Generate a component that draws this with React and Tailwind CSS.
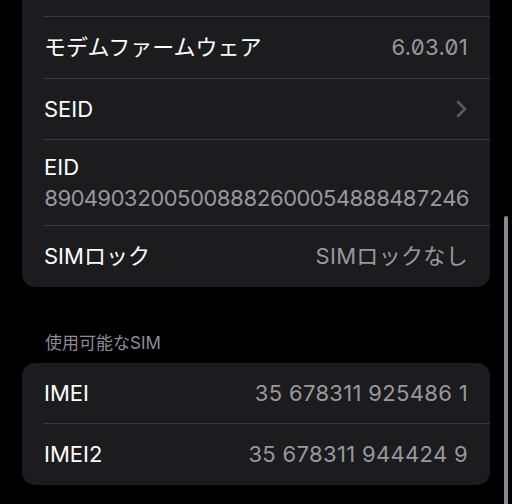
import React from 'react';

const font = "font-['Inter','Noto_Sans_CJK_JP',sans-serif]";

function Separator() {
    return <div className="ml-[22px] h-px bg-[#3a3a3c]" />;
}

function Row({ label, value, chevron, height = 'h-[61px]' }) {
    return (
        <div className={`${height} flex items-center justify-between px-[22px]`}>
            <span className="text-[22px] text-white">{label}</span>
            {value && (
                <span className="text-[22px] text-[#98989e] tracking-[0.015em] [font-feature-settings:'zero']">
                    {value}
                </span>
            )}
            {chevron && (
                <svg width="11" height="18" viewBox="0 0 11 18" className="mr-[1px]">
                    <path d="M2 2l7 7-7 7" fill="none" stroke="#5b5b5f" strokeWidth="2.6" strokeLinecap="round" strokeLinejoin="round" />
                </svg>
            )}
        </div>
    );
}

export default function App() {
    return (
        <div className={`relative w-[512px] h-[504px] overflow-hidden bg-black ${font}`}>
            {/* top card, scrolled past its first rows */}
            <section className="mx-[22px] bg-[#1c1c1e] rounded-b-[13px]">
                <div className="h-[16px]" />
                <Separator />
                <Row label="モデムファームウェア" value="6.03.01" />
                <Separator />
                <Row label="SEID" chevron height="h-[60px]" />
                <Separator />
                <div className="h-[85px] flex flex-col justify-center px-[22px]">
                    <span className="text-[22px] leading-[31px] text-white">EID</span>
                    <span className="text-[22px] leading-[31px] text-[#98989e] tabular-nums tracking-[-0.045em] whitespace-nowrap">
                        89049032005008882600054888487246
                    </span>
                </div>
                <Separator />
                <Row label="SIMロック" value="SIMロックなし" />
            </section>

            <div className="px-[45px] pt-[46px] pb-[10px] h-[76px]">
                <p className="text-[17px] leading-[20px] text-[#8d8d93]">使用可能なSIM</p>
            </div>

            <section className="mx-[22px] bg-[#1c1c1e] rounded-[13px]">
                <Row label="IMEI" value="35 678311 925486 1" height="h-[60px]" />
                <Separator />
                <Row label="IMEI2" value="35 678311 944424 9" />
            </section>

            {/* scroll indicator */}
            <div className="absolute right-[4px] top-[216px] w-[4px] h-[300px] rounded-full bg-[#8a8a8e]" />
        </div>
    );
}
